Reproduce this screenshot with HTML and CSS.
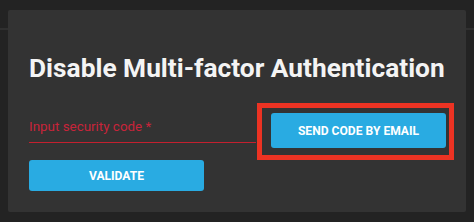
FILE: index.html
```html
<!DOCTYPE html>
<html lang="en">
<head>
    <meta charset="UTF-8">
    <title>Disable Multi-factor Authentication</title>
    <link rel="stylesheet" href="styles.css">
</head>
<body>
<div id="page">
    <div class="dialog">
        <h1 class="dialog-title">Disable Multi-factor Authentication</h1>
        <div class="code-row">
            <div class="field">
                <label class="field-label" for="code">Input security code *</label>
                <input class="field-input" id="code" type="text">
            </div>
            <div class="send-wrap">
                <button class="btn btn-send">SEND CODE BY EMAIL</button>
                <span class="highlight"></span>
            </div>
        </div>
        <button class="btn btn-validate">VALIDATE</button>
    </div>
</div>
</body>
</html>
```

FILE: styles.css
```css
* {
    margin: 0;
    padding: 0;
    box-sizing: border-box;
}

html, body {
    height: 100%;
}

body {
    background-color: #232323;
    background-image: linear-gradient(to bottom, transparent 28px, #303030 28px, #303030 30px, transparent 30px);
    font-family: Roboto, "Liberation Sans", sans-serif;
    overflow: hidden;
}

#page {
    padding: 10px 8px 0 8px;
}

.dialog {
    width: 458px;
    height: 202px;
    background-color: #333333;
    border-radius: 2px;
    padding: 43px 20px 0 21px;
}

.dialog-title {
    font-size: 26.3px;
    line-height: 30px;
    font-weight: 700;
    color: #f4f4f4;
    white-space: nowrap;
}

.code-row {
    display: flex;
    align-items: flex-start;
    gap: 15px;
    margin-top: 30px;
}

.field {
    width: 227px;
    height: 30px;
    padding-top: 6px;
    border-bottom: 1px solid #c4202f;
    position: relative;
}

.field-label {
    display: block;
    font-size: 13.4px;
    line-height: 16px;
    color: #c8243a;
}

.field-input {
    position: absolute;
    left: 0;
    right: 0;
    bottom: 0;
    height: 24px;
    background: transparent;
    border: none;
    outline: none;
}

.send-wrap {
    position: relative;
}

.btn {
    display: block;
    width: 175px;
    border: none;
    border-radius: 3px;
    background-color: #29abe2;
    color: #ffffff;
    font-family: Roboto, "Liberation Sans", sans-serif;
    font-weight: 700;
    font-size: 12.1px;
    cursor: pointer;
}

.btn-send {
    height: 35px;
}

.btn-validate {
    height: 31px;
    margin-top: 12px;
}

.highlight {
    position: absolute;
    left: -14px;
    right: -8px;
    top: -10px;
    bottom: -12px;
    border: 5px solid #ec3323;
    pointer-events: none;
}
```
